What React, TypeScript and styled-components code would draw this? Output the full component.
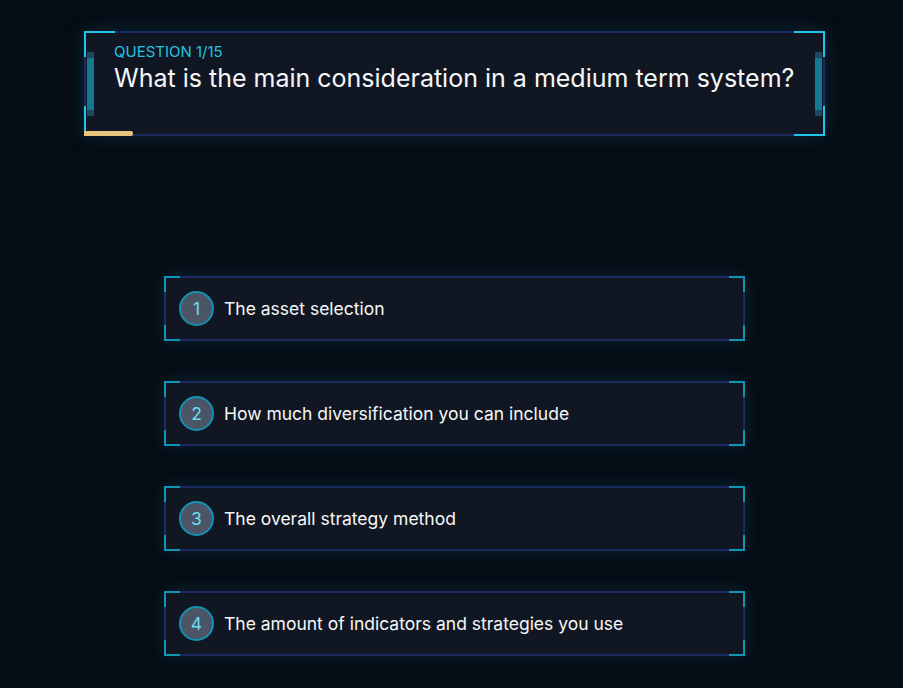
import React from "react";
import styled, { createGlobalStyle } from "styled-components";

const Global = createGlobalStyle`
  html, body {
    margin: 0;
    padding: 0;
    background: #060c14;
  }
  body {
    font-family: Inter, "Noto Sans", "Liberation Sans", sans-serif;
    color: #f1f3f6;
  }
`;

const Page = styled.div`
  min-height: 688px;
  box-sizing: border-box;
  padding: 31px 0 0 6px;
  display: flex;
  flex-direction: column;
  align-items: center;
  background: #060c14;
`;

const QuestionCard = styled.div`
  position: relative;
  box-sizing: border-box;
  width: 741px;
  height: 105px;
  background: #111722;
  border: 2px solid #1d2a62;
  box-shadow: 0 0 18px rgba(20, 150, 200, 0.22);
  padding: 9px 16px 0 28px;
`;

const Corner = styled.span<{ $v: "top" | "bottom"; $h: "left" | "right"; $w: number; $hgt: number; $color: string }>`
  position: absolute;
  ${(p) => p.$v}: -2px;
  ${(p) => p.$h}: -2px;
  width: ${(p) => p.$w}px;
  height: ${(p) => p.$hgt}px;
  border-${(p) => p.$v}: 2px solid ${(p) => p.$color};
  border-${(p) => p.$h}: 2px solid ${(p) => p.$color};
  box-sizing: border-box;
  pointer-events: none;
`;

const SideBar = styled.span<{ $side: "left" | "right" }>`
  position: absolute;
  top: 50%;
  ${(p) => p.$side}: 1px;
  width: 7px;
  height: 64px;
  transform: translateY(-50%);
  background: linear-gradient(
    to bottom,
    #1b4a5e 0,
    #1b4a5e 6px,
    #137894 6px,
    #137894 58px,
    #1b4a5e 58px,
    #1b4a5e 64px
  );
`;

const Progress = styled.span`
  position: absolute;
  z-index: 2;
  left: -2px;
  bottom: -2px;
  height: 5px;
  background: #e9c47c;
  border-radius: 0 2px 2px 0;
`;

const Label = styled.div`
  font-size: 15px;
  line-height: 19px;
  color: #22c3e3;
`;

const Title = styled.h1`
  margin: 2px 0 0;
  font-size: 25px;
  line-height: 30px;
  font-weight: 400;
  white-space: nowrap;
  color: #f6f7f9;
`;

const Options = styled.div`
  margin-top: 140px;
  display: flex;
  flex-direction: column;
  gap: 40px;
`;

const Option = styled.button`
  position: relative;
  box-sizing: border-box;
  width: 581px;
  height: 65px;
  display: flex;
  align-items: center;
  gap: 10px;
  padding: 0 0 0 13px;
  background: #111722;
  border: 2px solid #1d2a62;
  box-shadow: 0 0 16px rgba(20, 150, 200, 0.2);
  font-family: inherit;
  text-align: left;
  cursor: pointer;
`;

const Num = styled.span`
  box-sizing: border-box;
  width: 35px;
  height: 35px;
  border-radius: 50%;
  border: 2px solid #1592b3;
  background: #4b5565;
  color: #6adcf3;
  font-size: 17.5px;
  display: flex;
  align-items: center;
  justify-content: center;
  flex-shrink: 0;
`;

const OptionText = styled.span`
  font-size: 17.5px;
  font-weight: 400;
  color: #f6f7f9;
`;

const options = [
  "The asset selection",
  "How much diversification you can include",
  "The overall strategy method",
  "The amount of indicators and strategies you use",
];

export default function App() {
  const current = 1;
  const total = 15;
  return (
    <>
      <Global />
      <Page>
        <QuestionCard>
          <Corner $v="top" $h="left" $w={31} $hgt={26} $color="#22c6e6" />
          <Corner $v="top" $h="right" $w={31} $hgt={26} $color="#22c6e6" />
          <Corner $v="bottom" $h="left" $w={31} $hgt={30} $color="#22c6e6" />
          <Corner $v="bottom" $h="right" $w={31} $hgt={30} $color="#22c6e6" />
          <SideBar $side="left" />
          <SideBar $side="right" />
          <Progress style={{ width: `${(741 * current) / total}px` }} />
          <Label>QUESTION {current}/{total}</Label>
          <Title>What is the main consideration in a medium term system?</Title>
        </QuestionCard>
        <Options>
          {options.map((o, i) => (
            <Option key={i}>
              <Corner $v="top" $h="left" $w={16} $hgt={16} $color="#1195b6" />
              <Corner $v="top" $h="right" $w={16} $hgt={16} $color="#1195b6" />
              <Corner $v="bottom" $h="left" $w={16} $hgt={16} $color="#1195b6" />
              <Corner $v="bottom" $h="right" $w={16} $hgt={16} $color="#1195b6" />
              <Num>{i + 1}</Num>
              <OptionText>{o}</OptionText>
            </Option>
          ))}
        </Options>
      </Page>
    </>
  );
}
